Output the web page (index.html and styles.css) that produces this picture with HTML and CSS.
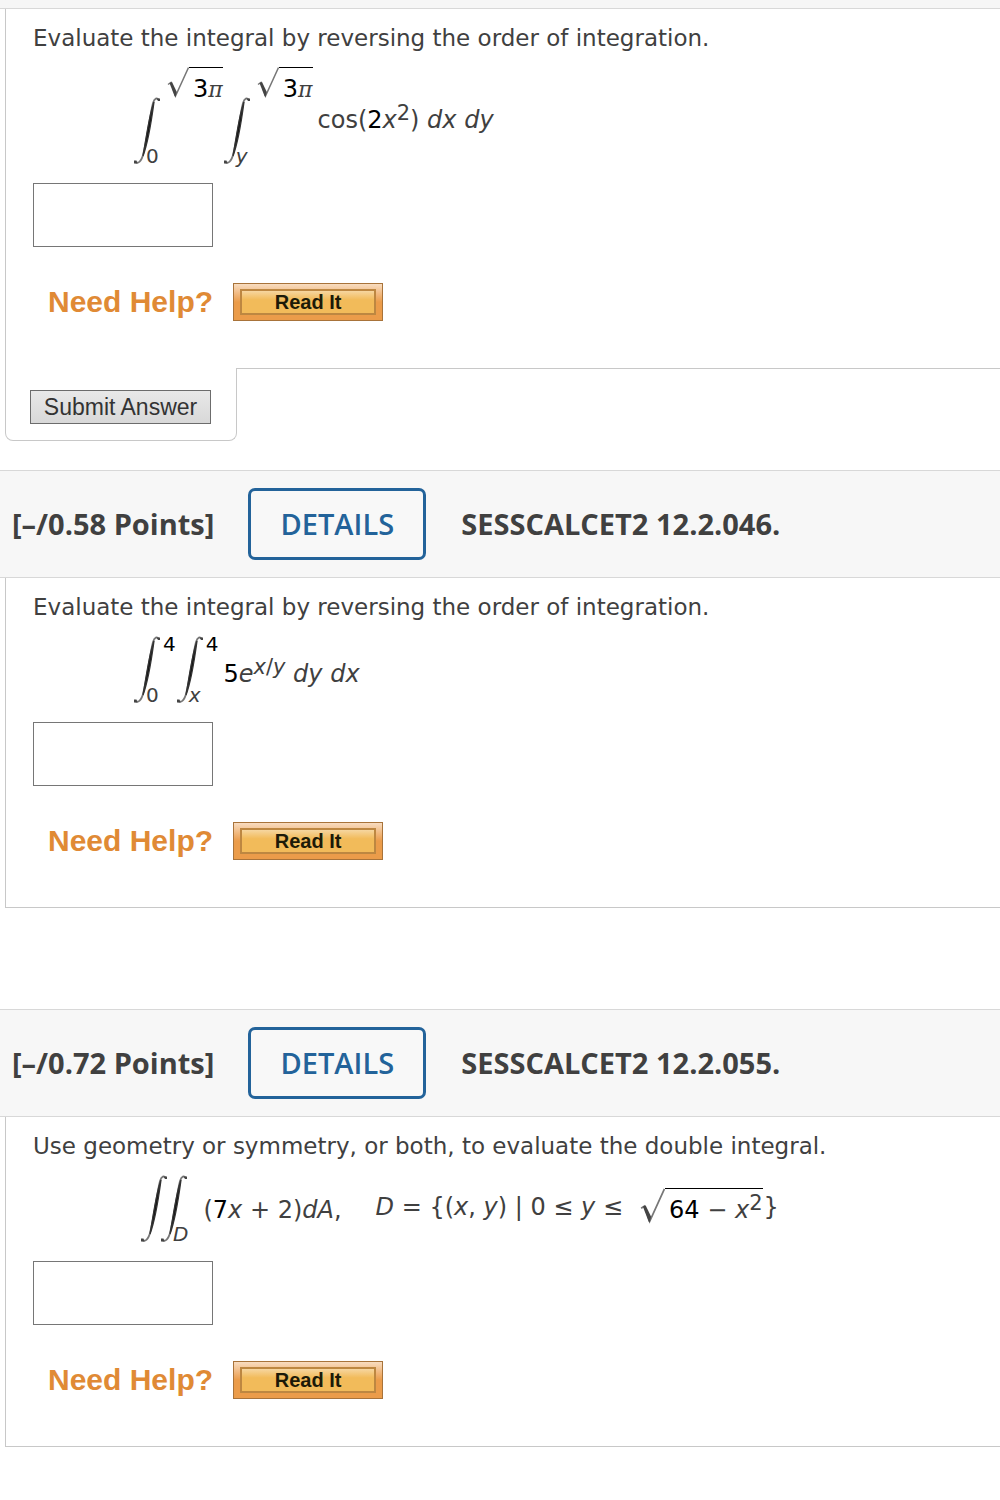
FILE: index.html
```html
<!DOCTYPE html>
<html lang="en">
<head>
    <meta charset="UTF-8">
    <meta name="viewport" content="width=device-width, initial-scale=1.0">
    <title>Homework - Double Integrals</title>
    <link rel="stylesheet" href="styles.css">
</head>
<body>
    <!-- shared math symbols -->
    <svg class="symbols" aria-hidden="true">
        <symbol id="integral" viewBox="0 0 26 68">
            <path d="M25 3C23 .5 20.500 1 19 6C16 18 13 42 9.500 56C7.500 65 4 67 1 65" fill="none" stroke="#777" stroke-width="1.800"/>
            <path d="M20 5C18 20 14 46 9 59C12 43 15 18 20 5Z" fill="#111" stroke="#333" stroke-width="1.300"/>
            <path d="M22.500 1.500h3.500v2.500h-2zM0 63.500h2.500l1 3h-3.500z" fill="#444"/>
        </symbol>
        <symbol id="root" viewBox="0 0 22 31">
            <path d="M1 17.500L4 15.500L8.500 29L21.500 .5" fill="none" stroke="#777" stroke-width="1.500"/>
            <path d="M2.500 16L5 15L9.800 25L8.500 30L7.500 29Z" fill="#444"/>
        </symbol>
    </svg>

    <div class="top-strip"></div>

    <div class="question-body has-submit">
        <label class="prompt" for="answer1">Evaluate the integral by reversing the order of integration.</label>
        <div class="math">
            <span class="int">
                <svg class="int-sign"><use href="#integral"/></svg>
                <span class="limits">
                    <span class="upper"><span class="sqrt"><svg class="root"><use href="#root"/></svg><span class="radicand"><b>3</b><i class="pi">π</i></span></span></span>
                    <span class="lower">0</span>
                </span>
            </span>
            <span class="int">
                <svg class="int-sign"><use href="#integral"/></svg>
                <span class="limits">
                    <span class="upper"><span class="sqrt"><svg class="root"><use href="#root"/></svg><span class="radicand"><b>3</b><i class="pi">π</i></span></span></span>
                    <span class="lower"><i>y</i></span>
                </span>
            </span>
            <span class="expr">cos(<b>2</b><i>x</i><sup>2</sup>) <i>dx</i> <i>dy</i></span>
        </div>
        <input class="answer" type="text" id="answer1">
        <div class="help">
            <span class="help-title">Need Help?</span>
            <button type="button" class="read-it">Read It</button>
        </div>
    </div>
    <div class="submit-row">
        <div class="submit-tab">
            <button type="submit" class="submit">Submit Answer</button>
        </div>
    </div>

    <div class="question-header">
        <span class="points">[–/0.58 Points]</span>
        <button type="button" class="details">DETAILS</button>
        <span class="source">SESSCALCET2 12.2.046.</span>
    </div>
    <div class="question-body">
        <label class="prompt" for="answer2">Evaluate the integral by reversing the order of integration.</label>
        <div class="math">
            <span class="int">
                <svg class="int-sign"><use href="#integral"/></svg>
                <span class="limits">
                    <span class="upper"><b>4</b></span>
                    <span class="lower">0</span>
                </span>
            </span>
            <span class="int">
                <svg class="int-sign"><use href="#integral"/></svg>
                <span class="limits">
                    <span class="upper"><b>4</b></span>
                    <span class="lower"><i>x</i></span>
                </span>
            </span>
            <span class="expr"><b>5</b><i>e</i><sup><i>x</i>/<i>y</i></sup> <i>dy</i> <i>dx</i></span>
        </div>
        <input class="answer" type="text" id="answer2">
        <div class="help">
            <span class="help-title">Need Help?</span>
            <button type="button" class="read-it">Read It</button>
        </div>
    </div>

    <div class="question-header spaced">
        <span class="points">[–/0.72 Points]</span>
        <button type="button" class="details">DETAILS</button>
        <span class="source">SESSCALCET2 12.2.055.</span>
    </div>
    <div class="question-body">
        <label class="prompt" for="answer3">Use geometry or symmetry, or both, to evaluate the double integral.</label>
        <div class="math region">
            <span class="int double">
                <svg class="int-sign"><use href="#integral"/></svg>
                <svg class="int-sign"><use href="#integral"/></svg>
                <span class="limits">
                    <span class="lower"><i>D</i></span>
                </span>
            </span>
            <span class="expr">(<b>7</b><i>x</i> + 2)<i>dA</i>,</span>
            <span class="expr set"><i>D</i> = {(<i>x</i>, <i>y</i>) | 0 ≤ <i>y</i> ≤</span>
            <span class="sqrt"><svg class="root tall"><use href="#root"/></svg><span class="radicand"><b>64</b> − <i>x</i><sup>2</sup></span></span>
            <span class="expr set">}</span>
        </div>
        <input class="answer" type="text" id="answer3">
        <div class="help">
            <span class="help-title">Need Help?</span>
            <button type="button" class="read-it">Read It</button>
        </div>
    </div>
</body>
</html>
```
FILE: styles.css
```css
* {
    box-sizing: border-box;
}
body {
    margin: 0;
    background: #fff;
    color: #404040;
    font-family: Verdana, "DejaVu Sans", sans-serif;
    font-size: 24px;
    line-height: 28px;
}
.symbols {
    display: none;
}
.top-strip {
    height: 9px;
    background: #f6f6f6;
    border-bottom: 1px solid #d8d8d8;
}

/* header bar */
.question-header {
    display: flex;
    align-items: center;
    height: 108px;
    padding: 0 12px;
    background: #f7f7f7;
    border-top: 1px solid #d8d8d8;
    border-bottom: 1px solid #d8d8d8;
    font-family: "Open Sans", sans-serif;
    font-size: 29px;
    font-weight: 700;
}
.question-header.spaced {
    margin-top: 101px;
}
.details {
    width: 178px;
    height: 72px;
    margin: 0 35px 0 34px;
    padding: 0;
    background: #f8f8f8;
    border: 3px solid #23639a;
    border-radius: 7px;
    color: #23639a;
    font-family: inherit;
    font-size: 29px;
    font-weight: 600;
    line-height: 28px;
}

/* question */
.question-body {
    margin-left: 5px;
    padding: 15px 27px 47px;
    border-left: 1px solid #c8c8c8;
    border-bottom: 1px solid #c8c8c8;
}
.question-body.has-submit {
    border-bottom: 0;
}
.prompt {
    display: block;
    font-size: 23px;
}
.answer {
    display: block;
    width: 180px;
    height: 64px;
    padding: 0 12px;
    border: 1px solid #767676;
    font-size: 24px;
}
.help {
    display: flex;
    align-items: center;
    gap: 20px;
    margin: 36px 0 0 15px;
}
.help-title {
    color: #e08a35;
    font-family: Arial, "Liberation Sans", sans-serif;
    font-size: 30px;
    font-weight: 700;
}
.read-it {
    width: 150px;
    height: 38px;
    padding: 0;
    background: linear-gradient(#f8dcc0, #eb9c4a 50%);
    border: 1px solid #a8733a;
    color: #1c1a08;
    font-family: Arial, "Liberation Sans", sans-serif;
    font-size: 20px;
    font-weight: 700;
    position: relative;
    z-index: 0;
}
.read-it::before {
    content: "";
    position: absolute;
    inset: 5px 6px;
    z-index: -1;
    background: linear-gradient(#f6d6a0, #f2bb5a 40%);
    border: 2px solid #bd8741;
}

/* submit tab */
.submit-row {
    display: flex;
    margin: 0 0 29px 5px;
}
.submit-row::after {
    content: "";
    flex: 1;
    border-top: 1px solid #c8c8c8;
}
.submit-tab {
    width: 232px;
    padding: 22px 24px 16px;
    border: 1px solid #c8c8c8;
    border-top: 0;
    border-radius: 0 0 8px 8px;
}
.submit {
    display: block;
    width: 181px;
    height: 34px;
    padding: 0;
    background: linear-gradient(#e8e8e8, #d8d8d8);
    border: 1px solid #6c6c6c;
    color: #333;
    font-family: Arial, "Liberation Sans", sans-serif;
    font-size: 23px;
}

/* math */
.math {
    display: flex;
    align-items: center;
    padding: 15px 0 18px 101px;
    white-space: nowrap;
}
.math b {
    color: #000;
    font-weight: 400;
}
.math sup {
    font-size: 21px;
    line-height: 0;
    vertical-align: 8px;
}
.int {
    display: flex;
    align-items: flex-end;
    margin-right: 1px;
}
.int-sign {
    width: 26px;
    height: 68px;
}
.limits {
    display: flex;
    flex-direction: column;
    justify-content: space-between;
    min-height: 68px;
    margin-left: -14px;
    font-size: 20px;
    line-height: 20px;
}
.upper {
    padding-left: 17px;
    line-height: 16px;
}
.upper .sqrt {
    margin: 0 0 42px 4px;
}
.sqrt {
    display: flex;
    align-items: flex-start;
}
.root {
    width: 22px;
    height: 31px;
}
.root.tall {
    width: 25px;
    height: 36px;
}
.radicand {
    padding: 7px 0 1px 4px;
    border-top: 1px solid #000;
    font-size: 24px;
    line-height: 28px;
}
.pi {
    font-family: "DejaVu Serif", serif;
    font-size: 22px;
    line-height: 20px;
}
.lower {
    margin-bottom: -1px;
}
.expr {
    padding: 8px 0 0 4px;
}

/* region description in set notation */
.region {
    padding-left: 108px;
}
.double .int-sign + .int-sign {
    margin-left: -6px;
}
.double .limits {
    justify-content: flex-end;
}
.region .expr {
    padding: 2px 0 0 14px;
}
.region .set {
    padding: 0 0 4px 34px;
}
.region .sqrt {
    margin: 0 0 6px 17px;
}
.region .sqrt + .set {
    padding-left: 1px;
}
```
